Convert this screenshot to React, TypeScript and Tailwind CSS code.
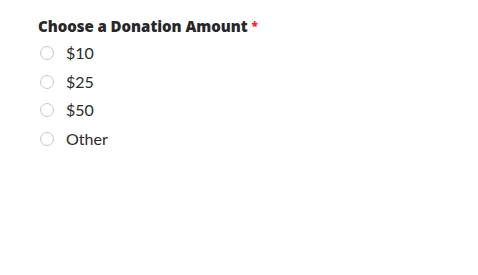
const options = ["$10", "$25", "$50", "Other"];

export default function App() {
  return (
    <div className="min-h-screen bg-white px-[38px] pt-[15px] font-['Lato',sans-serif] text-[#222]">
      <fieldset>
        <legend className="font-['Open_Sans',sans-serif] text-[15px] font-extrabold leading-[22px] tracking-[-0.05px] text-[#28282a]">
          Choose a Donation Amount{" "}
          <span className="relative -top-[2px] text-[12px] text-[#f0282f]">*</span>
        </legend>
        <div className="flex flex-col">
          {options.map((o) => (
            <label key={o} className="flex h-[28.6px] items-center gap-[12px]">
              <span className="ml-[2px] h-[14px] w-[14px] rounded-full border border-[#c8c8c8] bg-white" />
              <span className="text-[16px] text-[#2b2b2b]">{o}</span>
            </label>
          ))}
        </div>
      </fieldset>
    </div>
  );
}
